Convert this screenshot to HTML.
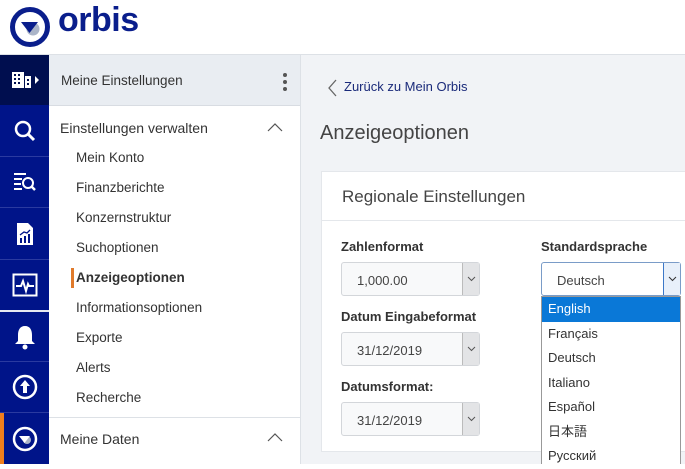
<!DOCTYPE html>
<html><head><meta charset="utf-8"><style>
*{box-sizing:border-box;margin:0;padding:0}
body{width:685px;height:464px;overflow:hidden;font-family:"Liberation Sans","Noto Sans CJK JP",sans-serif;background:#fff;position:relative;color:#333}
.abs{position:absolute}
.hdr{left:0;top:0;width:685px;height:55px;background:#fff;border-bottom:1px solid #dde1e6}
.rail{left:0;top:55px;width:49px;height:409px;background:#001489}
.cell{position:absolute;left:0;width:49px;border-bottom:1px solid #2a3aa0;display:flex;align-items:center;justify-content:center}
.side{left:49px;top:55px;width:252px;height:409px;background:#fff;border-right:1px solid #dde1e6}
.item{position:absolute;left:27px;font-size:13.5px;color:#333}
.main{left:301px;top:55px;width:384px;height:409px;background:#f1f3f6}
.card{left:321px;top:171px;width:364px;height:281px;background:#fff;border:1px solid #e4e7eb;border-right:none}
.lbl{font-size:13px;font-weight:bold;color:#333;position:absolute}
.sel{position:absolute;width:139px;height:34px;border:1px solid #d3d6da;border-radius:3px;background:#f8f9fa;font-size:13px;color:#444;padding:10px 0 0 15px}
.sel .b{position:absolute;right:0;top:0;width:17px;height:32px;background:#e3e4e6;border-left:1px solid #bbb}
.sel .b svg{position:absolute;left:4px;top:13px}
.dd{left:541px;top:296px;width:140px;height:168px;background:#fff;border:1px solid #999;border-bottom:none}
.dd div{height:24.5px;line-height:24px;font-size:13px;color:#333;padding:0 0 0 6px;overflow:hidden}
</style></head><body>
<div class="abs hdr">
 <svg class="abs" style="left:9px;top:6px" width="42" height="42" viewBox="0 0 42 42"><circle cx="21" cy="21" r="17.5" fill="none" stroke="#0a1e8c" stroke-width="5"/><circle cx="24" cy="23" r="6.5" fill="#aab4c8"/><path d="M12 16 L29 16 L20.5 27 Z" fill="#0a1e8c"/></svg>
 <div class="abs" style="left:58px;top:1px;font-size:34px;font-weight:bold;color:#0a1e8c;letter-spacing:-0.5px">orbis</div>
</div>
<div class="abs rail">
 <div class="cell" style="top:0;height:50px;background:#000e4f;border:none"><svg width="30" height="20" viewBox="0 0 30 20"><rect x="2" y="2" width="12" height="16" fill="#fff"/><rect x="15" y="6" width="6" height="12" fill="#fff"/><g fill="#000e4f"><rect x="4" y="4" width="2" height="2"/><rect x="8" y="4" width="2" height="2"/><rect x="4" y="8" width="2" height="2"/><rect x="8" y="8" width="2" height="2"/><rect x="4" y="12" width="2" height="2"/><rect x="8" y="12" width="2" height="2"/><rect x="17" y="9" width="2" height="2"/><rect x="17" y="13" width="2" height="2"/></g><path d="M25 6 L29 10 L25 14Z" fill="#fff"/></svg></div>
 <div class="cell" style="top:50px;height:52px"><svg width="24" height="24" viewBox="0 0 24 24"><circle cx="10" cy="10" r="7" fill="none" stroke="#fff" stroke-width="2.5"/><path d="M15 15 L21 21" stroke="#fff" stroke-width="3"/></svg></div>
 <div class="cell" style="top:102px;height:51px"><svg width="26" height="22" viewBox="0 0 26 22"><g stroke="#fff" stroke-width="2"><path d="M2 3H14M2 8H10M2 13H9M2 18H10"/></g><circle cx="16" cy="12" r="5" fill="none" stroke="#fff" stroke-width="2"/><path d="M19 15L23 19" stroke="#fff" stroke-width="2.5"/></svg></div>
 <div class="cell" style="top:153px;height:52px"><svg width="20" height="24" viewBox="0 0 20 24"><path d="M2 1H13L18 6V23H2Z" fill="#fff"/><g fill="#001489"><rect x="5" y="16" width="2" height="5"/><rect x="9" y="14" width="2" height="7"/><rect x="13" y="12" width="2" height="9"/></g><path d="M5 13L9 10L12 11L15 8" stroke="#001489" stroke-width="1.3" fill="none"/></svg></div>
 <div class="cell" style="top:205px;height:52px;border-bottom:2px solid #e6e8f0"><svg width="26" height="24" viewBox="0 0 26 24"><rect x="1.5" y="1.5" width="23" height="21" fill="none" stroke="#fff" stroke-width="2"/><path d="M4 13H9L11 8L14 18L16 11L17 13H22" stroke="#fff" stroke-width="2" fill="none"/></svg></div>
 <div class="cell" style="top:257px;height:50px"><svg width="22" height="26" viewBox="0 0 22 26"><path d="M11 2C6 2 4 6 4 11V17L1 20H21L18 17V11C18 6 16 2 11 2Z" fill="#fff"/><circle cx="11" cy="23" r="2.5" fill="#fff"/></svg></div>
 <div class="cell" style="top:307px;height:51px"><svg width="26" height="26" viewBox="0 0 26 26"><circle cx="13" cy="13" r="11" fill="none" stroke="#fff" stroke-width="2.5"/><path d="M13 6L18 12H15V19H11V12H8Z" fill="#fff"/></svg></div>
 <div class="cell" style="top:358px;height:51px;border:none"><div style="position:absolute;left:0;top:0;width:4px;height:51px;background:#f07f1e"></div><svg width="26" height="26" viewBox="0 0 26 26"><circle cx="13" cy="13" r="11" fill="none" stroke="#fff" stroke-width="2.5"/><circle cx="15" cy="14" r="4" fill="#aab4c8"/><path d="M7 10H18L12.5 17Z" fill="#fff"/></svg></div>
</div>
<div class="abs side">
 <div class="abs" style="left:0;top:0;width:251px;height:51px;background:#e9edf2;border-bottom:1px solid #d8dce2"></div>
 <div class="item" style="left:12px;top:18px">Meine Einstellungen</div>
 <div class="abs" style="left:234px;top:18px;width:4px;line-height:0"><div style="width:4px;height:4px;border-radius:2px;background:#555;margin-bottom:3px"></div><div style="width:4px;height:4px;border-radius:2px;background:#555;margin-bottom:3px"></div><div style="width:4px;height:4px;border-radius:2px;background:#555"></div></div>
 <div class="item" style="left:11px;top:65px;font-size:14px">Einstellungen verwalten</div>
 <svg class="abs" style="left:218px;top:67px" width="16" height="10"><path d="M1 9L8 2L15 9" stroke="#555" fill="none" stroke-width="1.2"/></svg>
 <div class="item" style="top:95px">Mein Konto</div>
 <div class="item" style="top:125px">Finanzberichte</div>
 <div class="item" style="top:155px">Konzernstruktur</div>
 <div class="item" style="top:185px">Suchoptionen</div>
 <div class="abs" style="left:22px;top:213px;width:3px;height:20px;background:#e07a2b"></div>
 <div class="item" style="top:215px;font-weight:bold">Anzeigeoptionen</div>
 <div class="item" style="top:245px">Informationsoptionen</div>
 <div class="item" style="top:275px">Exporte</div>
 <div class="item" style="top:305px">Alerts</div>
 <div class="item" style="top:335px">Recherche</div>
 <div class="abs" style="left:0;top:362px;width:251px;height:1px;background:#dde1e6"></div>
 <div class="item" style="left:11px;top:376px;font-size:14px">Meine Daten</div>
 <svg class="abs" style="left:218px;top:377px" width="16" height="10"><path d="M1 9L8 2L15 9" stroke="#555" fill="none" stroke-width="1.2"/></svg>
</div>
<div class="abs main">
 <svg class="abs" style="left:26px;top:24px" width="10" height="18"><path d="M9 1L2 9L9 17" stroke="#666" fill="none" stroke-width="1.3"/></svg>
 <div class="abs" style="left:43px;top:24px;font-size:13px;color:#1a2a7a">Zurück zu Mein Orbis</div>
 <div class="abs" style="left:19px;top:67px;font-size:20px;color:#444">Anzeigeoptionen</div>
</div>
<div class="abs card">
 <div class="abs" style="left:20px;top:15px;font-size:17px;color:#444">Regionale Einstellungen</div>
 <div class="abs" style="left:0;top:48px;width:364px;height:1px;background:#e4e7eb"></div>
</div>
<div class="lbl" style="left:341px;top:239px">Zahlenformat</div>
<div class="sel" style="left:341px;top:262px">1,000.00<div class="b"><svg width="9" height="6"><path d="M1 1L4.5 4.5L8 1" stroke="#555" fill="none"/></svg></div></div>
<div class="lbl" style="left:341px;top:309px">Datum Eingabeformat</div>
<div class="sel" style="left:341px;top:332px">31/12/2019<div class="b"><svg width="9" height="6"><path d="M1 1L4.5 4.5L8 1" stroke="#555" fill="none"/></svg></div></div>
<div class="lbl" style="left:341px;top:379px">Datumsformat:</div>
<div class="sel" style="left:341px;top:402px">31/12/2019<div class="b"><svg width="9" height="6"><path d="M1 1L4.5 4.5L8 1" stroke="#555" fill="none"/></svg></div></div>
<div class="lbl" style="left:541px;top:239px">Standardsprache</div>
<div class="sel" style="left:541px;top:262px;width:140px;background:#fff;border-color:#7a9cc8">Deutsch<div class="b" style="background:#e8f0fa;border-left:1px solid #3c78c8"><svg width="9" height="6"><path d="M1 1L4.5 4.5L8 1" stroke="#333" fill="none"/></svg></div></div>
<div class="abs dd">
 <div style="background:#0a78d7;color:#fff">English</div>
 <div>Français</div><div>Deutsch</div><div>Italiano</div><div>Español</div><div>日本語</div><div>Русский</div>
</div>
</body></html>
